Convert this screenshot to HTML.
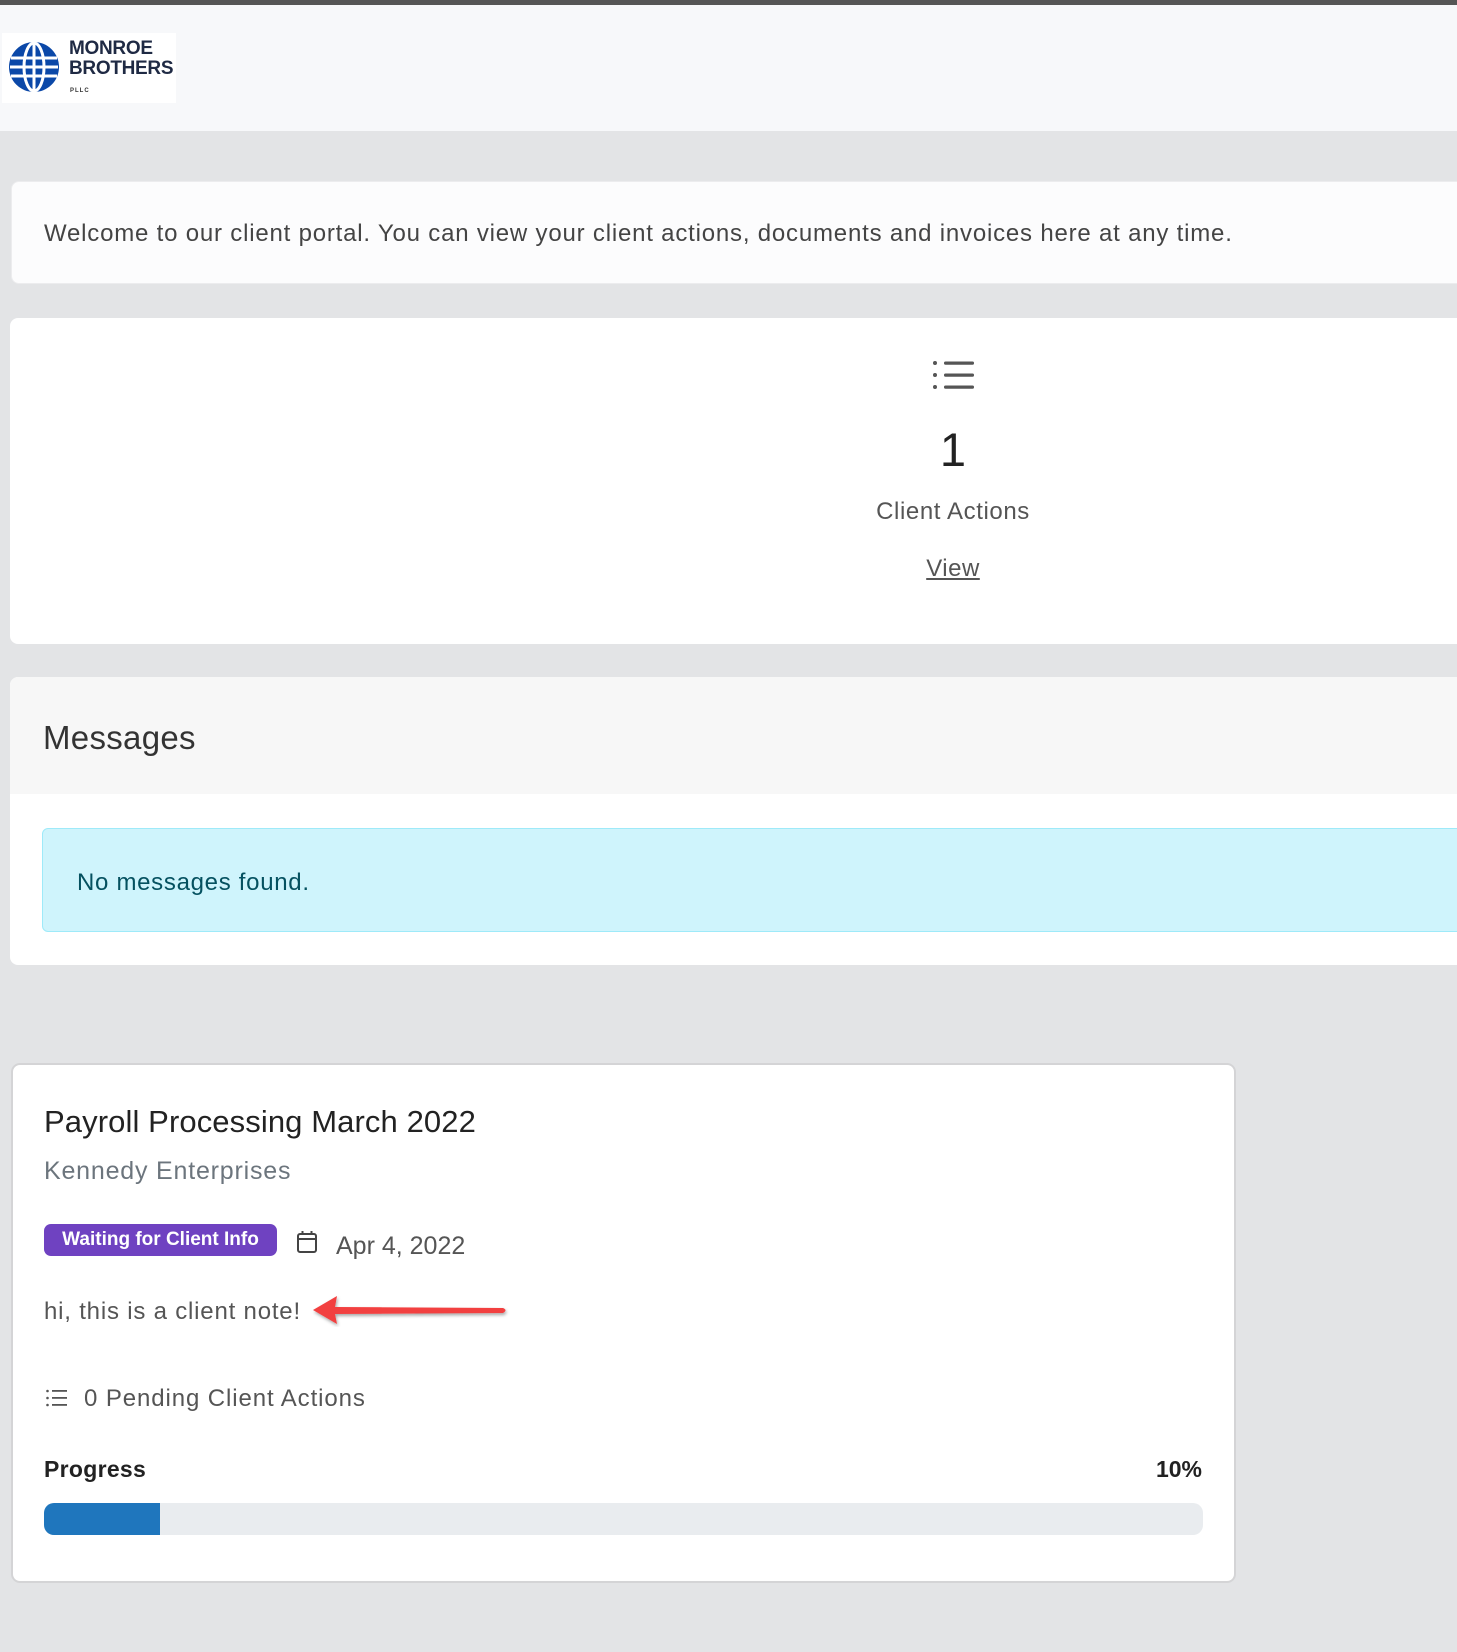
<!DOCTYPE html>
<html><head><meta charset="utf-8"><style>
*{margin:0;padding:0;box-sizing:border-box}
body{width:1457px;height:1652px;background:#e3e4e6;font-family:"Liberation Sans",sans-serif;color:#333;position:relative;overflow:hidden}
.a{position:absolute;white-space:nowrap}
</style></head><body>
<div class="a" style="left:0;top:0;width:1457px;height:5px;background:#555"></div>
<div class="a" style="left:0;top:5px;width:1457px;height:126px;background:#f7f8fa"></div>
<div class="a" style="left:2px;top:33px;width:174px;height:70px;background:#fff">
<svg class="a" style="left:5px;top:7px" width="54" height="54" viewBox="0 0 54 54"><circle cx="27" cy="27" r="25" fill="#0b48a8"/><g stroke="#fff" stroke-width="3" fill="none"><ellipse cx="27" cy="27" rx="10" ry="24"/><line x1="27" y1="3" x2="27" y2="51"/><line x1="4" y1="18" x2="50" y2="18"/><line x1="3" y1="27" x2="51" y2="27"/><line x1="4" y1="36" x2="50" y2="36"/></g></svg>
<div class="a" style="left:67px;top:6px;font-weight:bold;font-size:19px;line-height:20px;color:#1f2a44;letter-spacing:-0.3px">MONROE<br>BROTHERS</div>
<div class="a" style="left:68px;top:55px;font-weight:bold;font-size:6px;color:#333;letter-spacing:1px">PLLC</div>
</div>
<div class="a" style="left:11px;top:181px;width:1460px;height:103px;background:#fcfcfd;border-radius:8px;border:1px solid #ececee"></div>
<div class="a" style="left:44px;top:220px;font-size:24px;letter-spacing:0.8px;color:#444">Welcome to our client portal. You can view your client actions, documents and invoices here at any time.</div>
<div class="a" style="left:10px;top:318px;width:1460px;height:326px;background:#fff;border-radius:8px"></div>
<svg class="a" style="left:933px;top:360px" width="42" height="30" viewBox="0 0 42 30"><g fill="#555"><circle cx="2" cy="3" r="2"/><circle cx="2" cy="15" r="2"/><circle cx="2" cy="27" r="2"/><rect x="11" y="1.5" width="30" height="3.2" rx="1.5"/><rect x="11" y="13.5" width="30" height="3.2" rx="1.5"/><rect x="11" y="25.5" width="30" height="3.2" rx="1.5"/></g></svg>
<div class="a" style="left:853px;width:200px;top:422px;text-align:center;font-size:47px;color:#222">1</div>
<div class="a" style="left:853px;width:200px;top:498px;text-align:center;font-size:24px;letter-spacing:0.6px;color:#555">Client Actions</div>
<div class="a" style="left:853px;width:200px;top:555px;text-align:center;font-size:24px;letter-spacing:0.5px;color:#555;text-decoration:underline">View</div>
<div class="a" style="left:10px;top:677px;width:1460px;height:288px;background:#fff;border-radius:8px;overflow:hidden"><div style="height:117px;background:#f7f7f7"></div></div>
<div class="a" style="left:43px;top:719px;font-size:33px;letter-spacing:0.3px;color:#333">Messages</div>
<div class="a" style="left:42px;top:828px;width:1430px;height:104px;background:#cff4fc;border:1px solid #9eeaf9;border-radius:6px"></div>
<div class="a" style="left:77px;top:869px;font-size:24px;letter-spacing:0.7px;color:#055160">No messages found.</div>
<div class="a" style="left:11px;top:1063px;width:1225px;height:520px;background:#fff;border:2px solid #d4d4d6;border-radius:9px"></div>
<div class="a" style="left:44px;top:1104px;font-size:31px;letter-spacing:0.1px;color:#222">Payroll Processing March 2022</div>
<div class="a" style="left:44px;top:1157px;font-size:25px;letter-spacing:0.8px;color:#6c757d">Kennedy Enterprises</div>
<div class="a" style="left:44px;top:1224px;width:233px;height:32px;background:#6f42c1;border-radius:7px;color:#fff;font-weight:bold;font-size:19px;line-height:32px;text-align:center">Waiting for Client Info</div>
<svg class="a" style="left:296px;top:1230px" width="22" height="24" viewBox="0 0 22 24"><g fill="none" stroke="#444" stroke-width="2"><rect x="2" y="4" width="18" height="18" rx="2"/><line x1="2" y1="9" x2="20" y2="9"/><line x1="6.5" y1="1" x2="6.5" y2="5"/><line x1="15.5" y1="1" x2="15.5" y2="5"/></g></svg>
<div class="a" style="left:336px;top:1232px;font-size:25px;color:#555">Apr 4, 2022</div>
<div class="a" style="left:44px;top:1298px;font-size:24px;letter-spacing:0.8px;color:#555">hi, this is a client note!</div>
<svg class="a" style="left:305px;top:1290px" width="210" height="40" viewBox="0 0 210 40"><defs><filter id="s"><feDropShadow dx="1" dy="2" stdDeviation="1.5" flood-opacity="0.35"/></filter></defs><g filter="url(#s)" fill="#f24040"><path d="M8 20 L32 6 L30 17 L198 18 Q203 20 198 23 L30 24 L32 34 Z"/></g></svg>
<svg class="a" style="left:46px;top:1389px" width="22" height="18" viewBox="0 0 22 18"><g fill="#555"><circle cx="1.5" cy="2" r="1.3"/><circle cx="1.5" cy="9" r="1.3"/><circle cx="1.5" cy="16" r="1.3"/><rect x="6" y="1" width="15" height="1.8"/><rect x="6" y="8" width="15" height="1.8"/><rect x="6" y="15" width="15" height="1.8"/></g></svg>
<div class="a" style="left:84px;top:1385px;font-size:24px;letter-spacing:0.9px;color:#555">0 Pending Client Actions</div>
<div class="a" style="left:44px;top:1456px;font-size:23px;letter-spacing:0.3px;font-weight:bold;color:#222">Progress</div>
<div class="a" style="left:1100px;width:102px;text-align:right;top:1456px;font-size:23px;font-weight:bold;color:#222">10%</div>
<div class="a" style="left:44px;top:1503px;width:1159px;height:32px;background:#e9ecef;border-radius:10px;overflow:hidden"><div style="width:116px;height:32px;background:#1f76bd"></div></div>
</body></html>
